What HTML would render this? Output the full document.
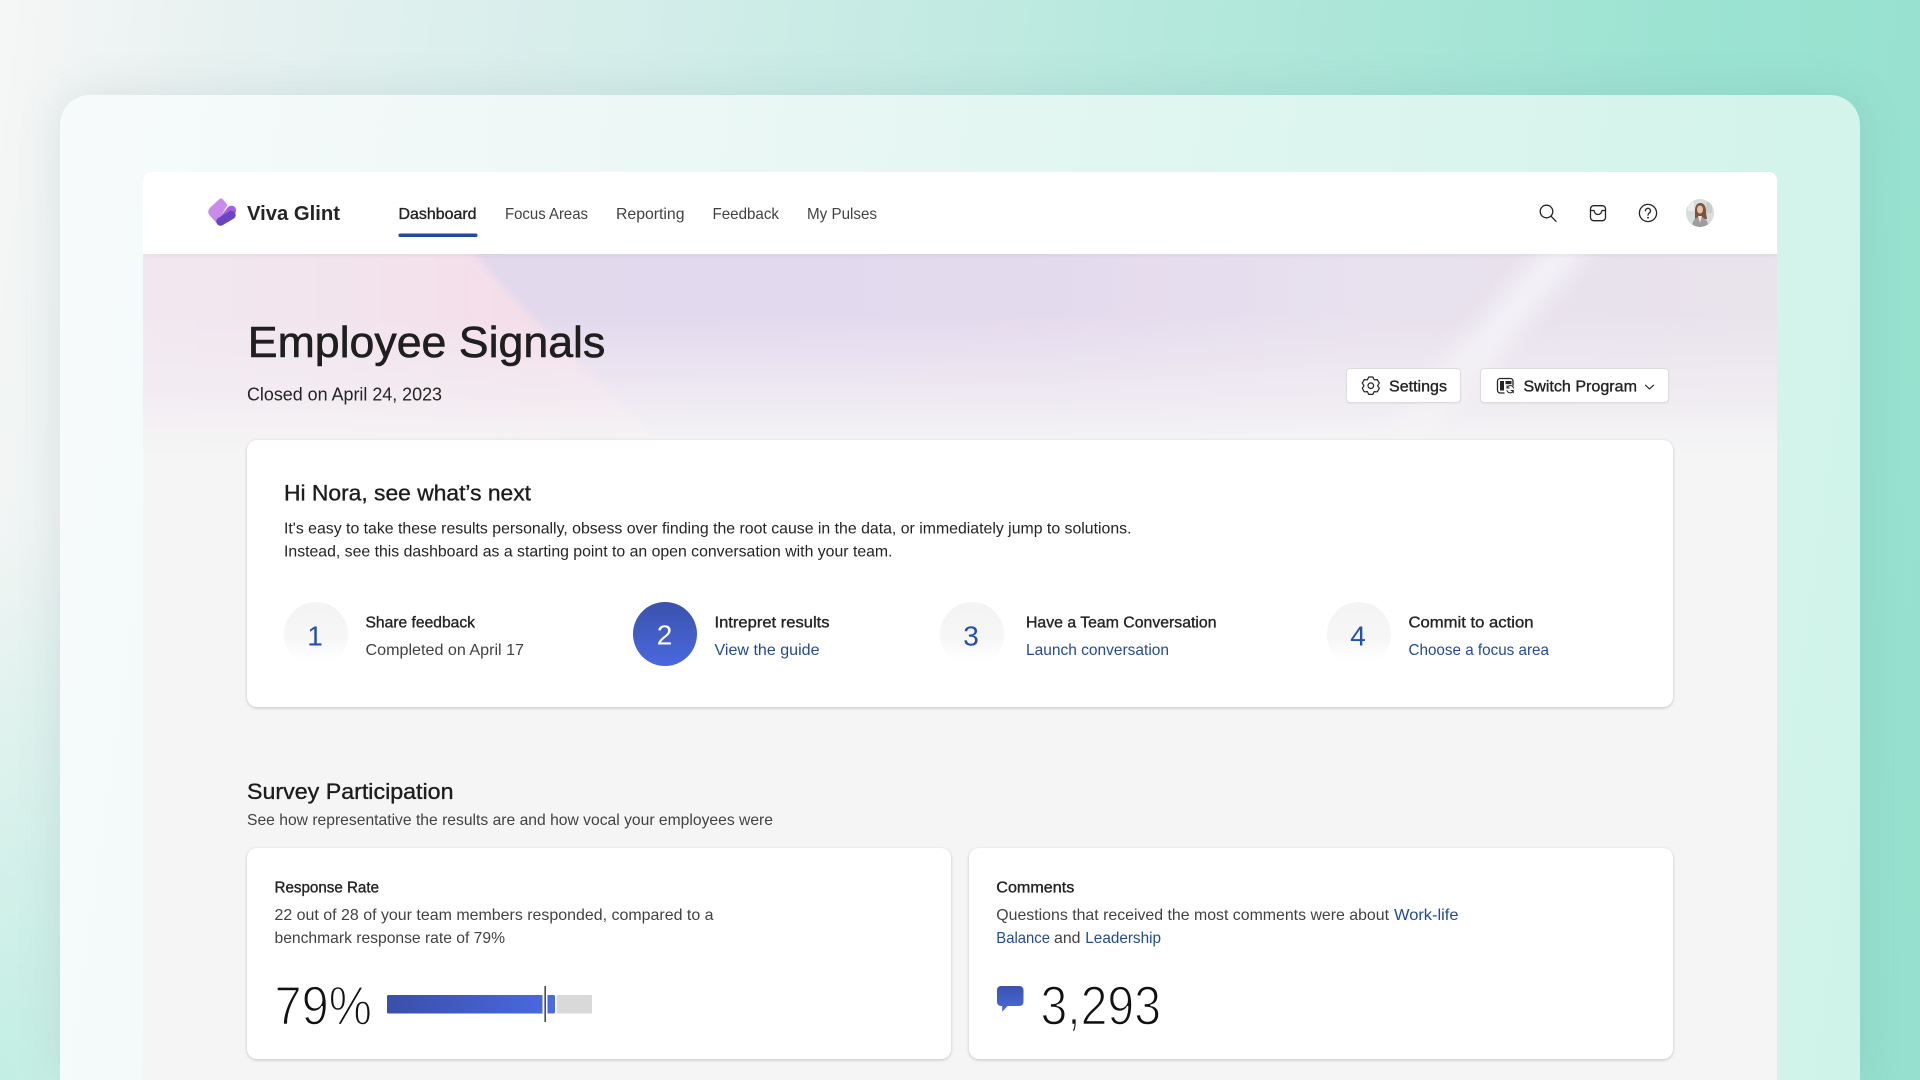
<!DOCTYPE html>
<html lang="en">
<head>
<meta charset="utf-8">
<title>Viva Glint – Employee Signals</title>
<style>
html,body{margin:0;padding:0;width:1920px;height:1080px;overflow:hidden;background:#e6f3f0}
*{box-sizing:border-box}
#root{position:relative;width:1920px;height:1080px;overflow:hidden}
.abs{position:absolute}
#bg{left:0;top:0;width:1920px;height:1080px;background:
 radial-gradient(ellipse 420px 560px at 0 1080px,rgba(190,238,226,.9),rgba(190,238,226,0) 100%),
 linear-gradient(97deg,#f6f6f6 0,#e6f1f0 12%,#d2ede9 33%,#b4e8dc 58%,#9ce3d2 82%,#95e0ce 100%)}
#panel{left:60px;top:95px;width:1800px;height:985px;border-radius:30px 30px 0 0;
 background:linear-gradient(98deg,#f7fafb 0,#eff8f7 25%,#e1f6f1 55%,#cff3e9 100%);
 box-shadow:0 0 46px rgba(70,100,105,.13)}
#inner{left:143px;top:172px;width:1634px;height:908px;background:#f5f5f5;border-radius:8px 8px 0 0;overflow:hidden}
#hero{left:0;top:82px;width:1634px;height:200px;overflow:hidden;
 background:linear-gradient(90deg,#e2d9ec 0,#e3d9ee 40%,#e4daee 55%,#e8e1ee 75%,#e9e3ec 100%)}
#pinkw{left:-40px;top:-40px;width:740px;height:270px;filter:blur(4px)}
#pink{left:0;top:0;width:740px;height:270px;background:linear-gradient(90deg,#f2e8f0 0,#f2e4ed 32%,#f4dde9 58%,#f3dfea 75%);clip-path:polygon(0 0,371px 0,371px 40px,425px 99px,497px 169px,600px 270px,0 270px)}
#streakw{left:1180px;top:-20px;width:300px;height:240px;filter:blur(12px)}
#streak{left:0;top:0;width:300px;height:240px;background:#f4f2f7;clip-path:polygon(78% 0,92% 0,26% 100%,10% 100%)}
#fade{left:0;top:60px;width:1634px;height:140px;background:linear-gradient(180deg,rgba(243,240,244,0),rgba(243,240,244,.7) 60%,#f5f5f5)}
#nav{left:0;top:0;width:1634px;height:82px;background:#fff;box-shadow:0 1px 6px rgba(0,0,0,.06);border-radius:8px 8px 0 0}
.card{position:absolute;background:#fff;border-radius:10px;box-shadow:0 1px 3px rgba(0,0,0,.2)}
.btn{position:absolute;background:#fff;border:1px solid #dcdcdc;border-radius:4px;top:368px;height:35px;box-shadow:0 1px 1px rgba(0,0,0,.05)}
.circ{position:absolute;top:602px;width:64px;height:64px;border-radius:50%;background:linear-gradient(180deg,#f4f4f4 0,#f6f6f6 55%,#fff 95%)}
svg{position:absolute;left:0;top:0;display:block}
text{font-family:"Liberation Sans",sans-serif;fill:#242424;font-size:16px}
.sub{fill:#424242}
.lnk{fill:#244a96}
.num{font-size:28px;fill:#2450ab}
.big{font-size:55px;fill:#111;stroke:#fff;stroke-width:1.500px}
.semi{stroke:#1c1c1c;stroke-width:.35px}
.head{stroke:#1c1c1c;stroke-width:.6px}
</style>
</head>
<body>
<div id="root">
<div id="bg" class="abs"></div>
<div id="panel" class="abs"></div>
<div id="inner" class="abs">
  <div id="hero" class="abs">
    <div id="pinkw" class="abs"><div id="pink" class="abs"></div></div>
    <div id="streakw" class="abs"><div id="streak" class="abs"></div></div>
    <div id="fade" class="abs"></div>
  </div>
  <div id="nav" class="abs"></div>
</div>

<div class="card" style="left:247px;top:440px;width:1426px;height:267px"></div>
<div class="circ" style="left:283.500px"></div>
<div class="circ" style="left:633px;background:linear-gradient(180deg,#3a52ac 0,#4a68de 100%)"></div>
<div class="circ" style="left:940px"></div>
<div class="circ" style="left:1326.500px"></div>
<div class="card" style="left:247px;top:848px;width:704px;height:211px"></div>
<div class="card" style="left:969px;top:848px;width:704px;height:211px"></div>
<div class="btn" style="left:1346px;width:115px"></div>
<div class="btn" style="left:1480px;width:189px"></div>

<svg width="1920" height="1080" viewBox="0 0 1920 1080" xmlns="http://www.w3.org/2000/svg">
  <defs>
    <linearGradient id="bar" x1="0" x2="1" y1="0" y2="0"><stop offset="0" stop-color="#3a4fa8"/><stop offset="1" stop-color="#4a6ae2"/></linearGradient>
    <linearGradient id="cm" x1="0" x2="0" y1="0" y2="1"><stop offset="0" stop-color="#3a52ad"/><stop offset="1" stop-color="#4a69df"/></linearGradient>
    <clipPath id="av"><circle cx="1700" cy="213" r="14"/></clipPath>
  </defs>

  <!-- logo -->
  <path d="M219 199.500q2-2.200 4 0l4.500 5.500q-5 9-11 18l-6.300-7q-2.800-3.200-1.800-5.500q.5-1.400 1.800-3z" fill="#c98cea"/>
  <path d="M221 216L228 207q3.500-2.600 6.500-.2q3 2.900 .8 6l-8 8.500z" fill="#a55fe1"/>
  <path d="M220.500 221.500L231.500 215" stroke="#6a45c3" stroke-width="8.500" stroke-linecap="round" fill="none"/>

  <!-- nav -->
  <text x="247" y="220" style="font-size:20px;font-weight:700" textLength="93" lengthAdjust="spacingAndGlyphs">Viva Glint</text>
  <text x="398.500" y="219" class="semi" textLength="78" lengthAdjust="spacingAndGlyphs">Dashboard</text>
  <text x="505" y="219" class="sub" textLength="83" lengthAdjust="spacingAndGlyphs">Focus Areas</text>
  <text x="616" y="219" class="sub" textLength="68.500" lengthAdjust="spacingAndGlyphs">Reporting</text>
  <text x="712.500" y="219" class="sub" textLength="66.500" lengthAdjust="spacingAndGlyphs">Feedback</text>
  <text x="807" y="219" class="sub" textLength="70" lengthAdjust="spacingAndGlyphs">My Pulses</text>
  <rect x="398.500" y="233.500" width="79" height="3.500" rx="1.500" fill="#1d4ba0"/>

  <!-- nav icons -->
  <g fill="none" stroke="#242424" stroke-width="1.300" stroke-linecap="round" stroke-linejoin="round">
    <circle cx="1546.500" cy="211.500" r="6.300"/>
    <path d="M1551 216.200L1556 221.300"/>
    <rect x="1590.500" y="205.700" width="15" height="15" rx="3.200"/>
    <path d="M1590.500 210.500h3.500c.6 2.800 2 4 4 4s3.400-1.200 4-4h3.500"/>
    <circle cx="1648" cy="213" r="8.600"/>
    <path d="M1645.500 210.800a2.500 2.500 0 1 1 4 2c-1 .8-1.500 1.300-1.500 2.300"/>
  </g>
  <circle cx="1648" cy="217.700" r=".9" fill="#242424"/>

  <!-- avatar -->
  <g clip-path="url(#av)">
    <rect x="1686" y="199" width="28" height="28" fill="#d6dddc"/>
    <rect x="1688" y="202" width="6" height="9" fill="#eaeeed"/>
    <rect x="1706" y="202" width="6" height="11" fill="#c4cfcd"/>
    <path d="M1695 211c0-6 2.500-8 5.500-8s5.500 3 5.500 8c0 4 1 6 1 8h-12c0-3 0-4 0-8z" fill="#7d5235"/>
    <ellipse cx="1700" cy="209.500" rx="3" ry="4" fill="#e6c0a8"/>
    <path d="M1692 228c0-7 3-11 8-11s8 4 9 11z" fill="#a19d9e"/>
    <path d="M1698 216l2 7 2-7z" fill="#ece6e3"/>
  </g>

  <!-- hero -->
  <text x="247.800" y="357" style="font-size:44px;fill:#1f1f1f" class="head" textLength="357.500" lengthAdjust="spacingAndGlyphs">Employee Signals</text>
  <text x="247" y="400.500" style="font-size:18px" textLength="195" lengthAdjust="spacingAndGlyphs">Closed on April 24, 2023</text>

  <!-- settings -->
  <g transform="translate(1370.800,385.700)" fill="none" stroke="#242424" stroke-width="1.200" stroke-linejoin="round">
    <path d="M-2.090 -8.700L2.090 -8.700L3.400 -5.890L6.500 -6.100L8.500 -2.600L6.800 0L8.500 2.600L6.500 6.100L3.400 5.890L2.090 8.700L-2.090 8.700L-3.400 5.890L-6.500 6.100L-8.500 2.600L-6.800 0L-8.500 -2.600L-6.500 -6.100L-3.400 -5.890z"/>
    <circle r="2.800"/>
  </g>
  <text x="1389" y="391.500" class="semi" textLength="58" lengthAdjust="spacingAndGlyphs">Settings</text>

  <!-- switch program -->
  <g>
    <path d="M1504 393h-3.800a2.700 2.700 0 0 1-2.700-2.700v-9.100a2.700 2.700 0 0 1 2.700-2.700h10.100a2.700 2.700 0 0 1 2.700 2.700v4" fill="none" stroke="#242424" stroke-width="1.300" stroke-linecap="round"/>
    <rect x="1500" y="381" width="4" height="9.500" fill="#242424"/>
    <rect x="1505.500" y="381" width="6" height="3.200" fill="#242424"/>
    <path d="M1507 390.500a3.200 3.200 0 0 0 6 .5M1513.300 392.700V390.500h-2.200M1513.500 388a3.200 3.200 0 0 0-6-.5M1507 385.800v2.200h2.200" fill="none" stroke="#242424" stroke-width="1" stroke-linecap="round"/>
  </g>
  <text x="1523.500" y="391.500" class="semi" textLength="113.500" lengthAdjust="spacingAndGlyphs">Switch Program</text>
  <path d="M1645.500 385.200L1649.500 389L1653.500 385.200" fill="none" stroke="#242424" stroke-width="1.200" stroke-linecap="round" stroke-linejoin="round"/>

  <!-- next card -->
  <text x="284" y="500.700" style="font-size:22px;fill:#1c1c1c" class="semi" textLength="247" lengthAdjust="spacingAndGlyphs">Hi Nora, see what’s next</text>
  <text x="284" y="533.500" textLength="847.500" lengthAdjust="spacingAndGlyphs">It's easy to take these results personally, obsess over finding the root cause in the data, or immediately jump to solutions.</text>
  <text x="284" y="556.500" textLength="608.500" lengthAdjust="spacingAndGlyphs">Instead, see this dashboard as a starting point to an open conversation with your team.</text>

  <text x="315" y="645.700" class="num" text-anchor="middle">1</text>
  <text x="664.500" y="644.500" class="num" text-anchor="middle" style="fill:#fff">2</text>
  <text x="971" y="645.700" class="num" text-anchor="middle">3</text>
  <text x="1358" y="645.700" class="num" text-anchor="middle">4</text>

  <text x="365.500" y="627.500" class="semi" textLength="109.500" lengthAdjust="spacingAndGlyphs">Share feedback</text>
  <text x="365.500" y="655" class="sub" textLength="158.500" lengthAdjust="spacingAndGlyphs">Completed on April 17</text>
  <text x="714.500" y="627.500" class="semi" textLength="115" lengthAdjust="spacingAndGlyphs">Intrepret results</text>
  <text x="714.500" y="655" class="lnk" textLength="105" lengthAdjust="spacingAndGlyphs">View the guide</text>
  <text x="1026" y="627.500" class="semi" textLength="190.500" lengthAdjust="spacingAndGlyphs">Have a Team Conversation</text>
  <text x="1026" y="655" class="lnk" textLength="143" lengthAdjust="spacingAndGlyphs">Launch conversation</text>
  <text x="1408.500" y="627.500" class="semi" textLength="125" lengthAdjust="spacingAndGlyphs">Commit to action</text>
  <text x="1408.500" y="655" class="lnk" textLength="140.500" lengthAdjust="spacingAndGlyphs">Choose a focus area</text>

  <!-- section -->
  <text x="247" y="799" style="font-size:22px;fill:#1c1c1c" class="semi" textLength="206.500" lengthAdjust="spacingAndGlyphs">Survey Participation</text>
  <text x="247" y="825" class="sub" textLength="526" lengthAdjust="spacingAndGlyphs">See how representative the results are and how vocal your employees were</text>

  <!-- response card -->
  <text x="274.500" y="892.500" class="semi" style="font-size:15.500px" textLength="104.500" lengthAdjust="spacingAndGlyphs">Response Rate</text>
  <text x="274.500" y="920" class="sub" textLength="439" lengthAdjust="spacingAndGlyphs">22 out of 28 of your team members responded, compared to a</text>
  <text x="274.500" y="943" class="sub" textLength="230.500" lengthAdjust="spacingAndGlyphs">benchmark response rate of 79%</text>
  <text x="274.500" y="1024.500" class="big" textLength="97.500" lengthAdjust="spacingAndGlyphs">79%</text>
  <rect x="387" y="995" width="168" height="18.500" rx="1.500" fill="url(#bar)"/>
  <rect x="556.800" y="995" width="35.200" height="18.500" rx="1" fill="#d9d9d9"/>
  <rect x="542.500" y="994" width="5" height="21" fill="#fff"/>
  <rect x="544.500" y="986" width="1.300" height="36" fill="#222"/>

  <!-- comments card -->
  <text x="996.300" y="892.500" class="semi" style="font-size:15.500px" textLength="78" lengthAdjust="spacingAndGlyphs">Comments</text>
  <text x="996.300" y="920" class="sub" textLength="392.700" lengthAdjust="spacingAndGlyphs">Questions that received the most comments were about</text>
  <text x="1394" y="920" class="lnk" textLength="64.500" lengthAdjust="spacingAndGlyphs">Work-life</text>
  <text x="996.300" y="943" class="lnk" textLength="53.700" lengthAdjust="spacingAndGlyphs">Balance</text>
  <text x="1054" y="943" class="sub" textLength="26.500" lengthAdjust="spacingAndGlyphs">and</text>
  <text x="1085.300" y="943" class="lnk" textLength="75.700" lengthAdjust="spacingAndGlyphs">Leadership</text>
  <path d="M1001 986h18.500a4 4 0 0 1 4 4v12a4 4 0 0 1-4 4h-12l-5.300 5.700v-5.700h-1.200a4 4 0 0 1-4-4v-12a4 4 0 0 1 4-4z" fill="url(#cm)"/>
  <text x="1040.500" y="1024.500" class="big" textLength="120.500" lengthAdjust="spacingAndGlyphs">3,293</text>
</svg>
</div>
</body>
</html>
